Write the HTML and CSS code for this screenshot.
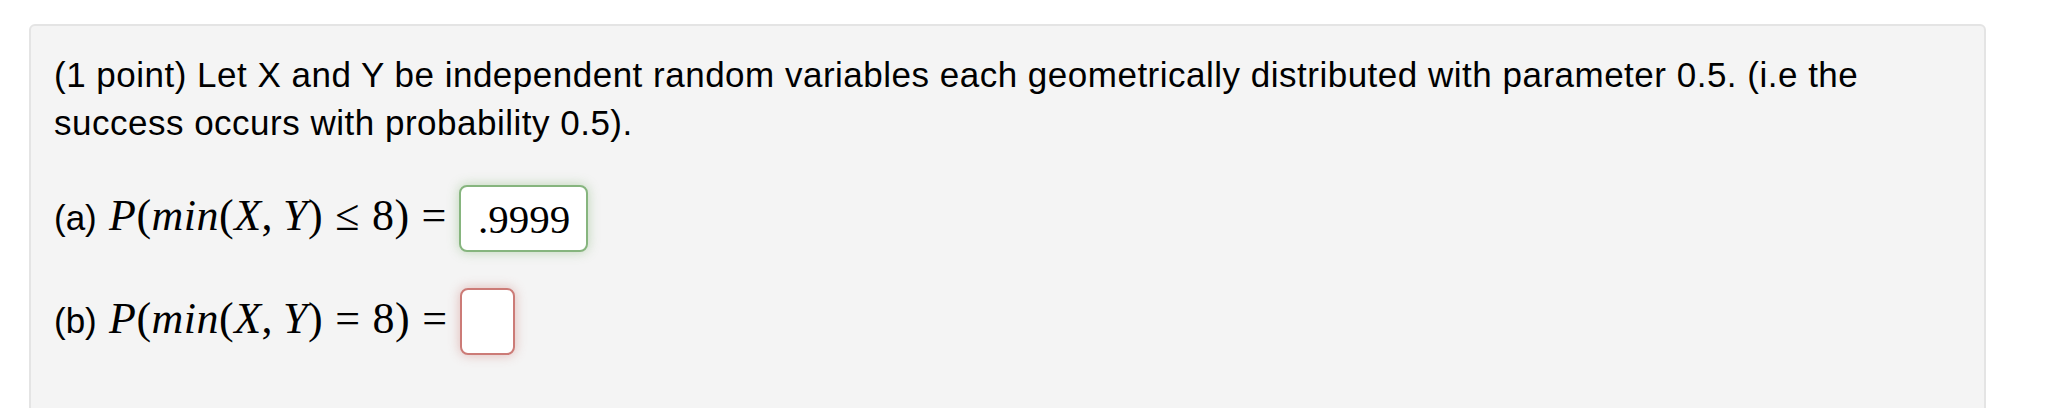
FILE: index.html
```html
<!DOCTYPE html>
<html>
<head>
<meta charset="utf-8">
<link rel="stylesheet" href="styles.css">
</head>
<body>
<div class="page">
  <div class="well">
    <p class="intro">(1 point) Let X and Y be independent random variables each geometrically distributed with parameter 0.5. (i.e the success occurs with probability 0.5).</p>
    <div class="part part-a"><span class="label">(a)</span> <span class="math"><span class="mi">P</span><span class="mo">(</span><span class="mi">min</span><span class="mo">(</span><span class="mi">X</span><span class="mo comma">,</span><span class="mi">Y</span><span class="mo">)</span><span class="rel">≤</span><span class="mn">8</span><span class="mo">)</span><span class="rel">=</span></span><input class="ans ok" type="text" value=".9999"></div>
    <div class="part part-b"><span class="label">(b)</span> <span class="math"><span class="mi">P</span><span class="mo">(</span><span class="mi">min</span><span class="mo">(</span><span class="mi">X</span><span class="mo comma">,</span><span class="mi">Y</span><span class="mo">)</span><span class="rel">=</span><span class="mn">8</span><span class="mo">)</span><span class="rel">=</span></span><input class="ans bad narrow" type="text" value=""></div>
  </div>
</div>
</body>
</html>
```

FILE: styles.css
```css
html, body {
  margin: 0;
  padding: 0;
  background: #ffffff;
}
.page {
  padding: 24px 0 0 29px;
}
.well {
  width: 1957px;
  box-sizing: border-box;
  height: 420px;
  background: #f4f4f4;
  border: 2px solid #e4e4e4;
  border-radius: 6px;
  padding: 25px 24px 0 23px;
  font-family: "Liberation Sans", Arial, Helvetica, sans-serif;
  font-size: 35px;
  letter-spacing: 0.5px;
  line-height: 48px;
  color: #000;
}
.intro {
  margin: 0;
}
.part {
  white-space: nowrap;
}
.part-a {
  margin-top: 38px;
}
.part-b {
  margin-top: 36px;
}
.label {
  letter-spacing: 0;
}
.math {
  font-family: "Liberation Serif", "Times New Roman", serif;
  font-size: 44px;
  letter-spacing: 0.5px;
  margin-left: 2px;
}
.mi {
  font-style: italic;
}
.mo.comma {
  margin-right: 10px;
}
.rel {
  margin: 0 12px;
}
.ans {
  box-sizing: border-box;
  height: 67px;
  width: 129px;
  padding: 0 16px 0 17px;
  margin-left: 0;
  font-family: "Liberation Serif", "Times New Roman", serif;
  font-size: 41px;
  letter-spacing: 0;
  color: #000;
  background: #fff;
  border-radius: 8px;
  border: 2px solid #86b57e;
  outline: none;
  vertical-align: -3px;
}
.ans.ok {
  border-color: #86b57e;
  box-shadow: 0 0 12px rgba(120, 175, 105, 0.45);
}
.ans.bad {
  border-color: #cc7b77;
  box-shadow: 0 0 12px rgba(200, 110, 105, 0.45);
}
.ans.narrow {
  width: 55px;
}
```
